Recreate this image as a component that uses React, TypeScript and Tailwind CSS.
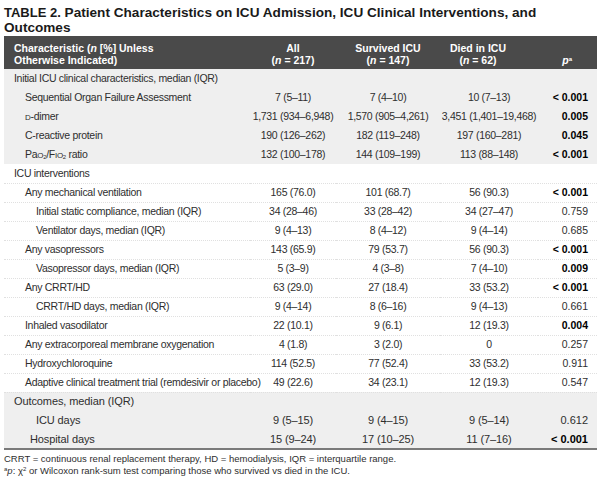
import React from "react";

type Row = {
  label: React.ReactNode;
  level: number;
  all?: string;
  survived?: string;
  died?: string;
  p?: string;
  bold?: boolean;
};

type Section = { gray: boolean; rows: Row[] };

const Pao2 = (
  <span>
    Pa<span className="text-[8px]">O</span>
    <sub className="text-[6px]">2</sub>/F<span className="text-[8px]">I</span>
    <span className="text-[8px]">O</span>
    <sub className="text-[6px]">2</sub> ratio
  </span>
);

const sections: Section[] = [
  {
    gray: true,
    rows: [
      { label: "Initial ICU clinical characteristics, median (IQR)", level: 0 },
      { label: "Sequential Organ Failure Assessment", level: 1, all: "7 (5–11)", survived: "7 (4–10)", died: "10 (7–13)", p: "< 0.001", bold: true },
      {
        label: (
          <span>
            <span className="text-[8px]">D</span>-dimer
          </span>
        ),
        level: 1,
        all: "1,731 (934–6,948)",
        survived: "1,570 (905–4,261)",
        died: "3,451 (1,401–19,468)",
        p: "0.005",
        bold: true,
      },
      { label: "C-reactive protein", level: 1, all: "190 (126–262)", survived: "182 (119–248)", died: "197 (160–281)", p: "0.045", bold: true },
      { label: Pao2, level: 1, all: "132 (100–178)", survived: "144 (109–199)", died: "113 (88–148)", p: "< 0.001", bold: true },
    ],
  },
  {
    gray: false,
    rows: [
      { label: "ICU interventions", level: 0 },
      { label: "Any mechanical ventilation", level: 1, all: "165 (76.0)", survived: "101 (68.7)", died: "56 (90.3)", p: "< 0.001", bold: true },
      { label: "Initial static compliance, median (IQR)", level: 2, all: "34 (28–46)", survived: "33 (28–42)", died: "34 (27–47)", p: "0.759" },
      { label: "Ventilator days, median (IQR)", level: 2, all: "9 (4–13)", survived: "8 (4–12)", died: "9 (4–14)", p: "0.685" },
      { label: "Any vasopressors", level: 1, all: "143 (65.9)", survived: "79 (53.7)", died: "56 (90.3)", p: "< 0.001", bold: true },
      { label: "Vasopressor days, median (IQR)", level: 2, all: "5 (3–9)", survived: "4 (3–8)", died: "7 (4–10)", p: "0.009", bold: true },
      { label: "Any CRRT/HD", level: 1, all: "63 (29.0)", survived: "27 (18.4)", died: "33 (53.2)", p: "< 0.001", bold: true },
      { label: "CRRT/HD days, median (IQR)", level: 2, all: "9 (4–14)", survived: "8 (6–16)", died: "9 (4–13)", p: "0.661" },
      { label: "Inhaled vasodilator", level: 1, all: "22 (10.1)", survived: "9 (6.1)", died: "12 (19.3)", p: "0.004", bold: true },
      { label: "Any extracorporeal membrane oxygenation", level: 1, all: "4 (1.8)", survived: "3 (2.0)", died: "0", p: "0.257" },
      { label: "Hydroxychloroquine", level: 1, all: "114 (52.5)", survived: "77 (52.4)", died: "33 (53.2)", p: "0.911" },
      { label: "Adaptive clinical treatment trial (remdesivir or placebo)", level: 1, all: "49 (22.6)", survived: "34 (23.1)", died: "12 (19.3)", p: "0.547" },
    ],
  },
  {
    gray: true,
    rows: [
      { label: "Outcomes, median (IQR)", level: 0 },
      { label: "ICU days", level: 3, all: "9 (5–15)", survived: "9 (4–15)", died: "9 (5–14)", p: "0.612" },
      { label: "Hospital days", level: 4, all: "15 (9–24)", survived: "17 (10–25)", died: "11 (7–16)", p: "< 0.001", bold: true },
    ],
  },
];

// left padding per indent level (table starts at x=4)
const indent = ["pl-[10px]", "pl-[21px]", "pl-[32px]", "pl-[32px]", "pl-[26px]"];

export default function App() {
  return (
    <div className="w-[600px] h-[477px] bg-white text-[#2e2e2e] font-['Liberation_Sans',Arial,sans-serif] overflow-hidden">
      <h1 className="px-1 pt-[5px] mb-[1px] text-[13.6px] leading-[15px] font-bold text-[#1a1a1a]">
        <span className="whitespace-nowrap">
          <span className="text-[13px]">TABLE 2.</span>{" "}
          <span>Patient Characteristics on ICU Admission, ICU Clinical Interventions, and</span>
        </span>
        <br />
        <span>Outcomes</span>
      </h1>

      <table className="ml-1 w-[593px] table-fixed border-collapse">
        <colgroup>
          <col className="w-[246px]" />
          <col className="w-[86px]" />
          <col className="w-[104px]" />
          <col className="w-[98px]" />
          <col className="w-[59px]" />
        </colgroup>
        <thead>
          <tr className="h-[33px] bg-[#4a4a4a] text-white text-[10.5px] leading-[12px] font-bold">
            <th className="pl-[10px] pt-[3px] text-left">
              Characteristic (<i>n</i> [%] Unless
              <br />
              Otherwise Indicated)
            </th>
            <th className="pt-[3px] text-center">
              All
              <br />(<i>n</i> = 217)
            </th>
            <th className="pt-[3px] text-center">
              Survived ICU
              <br />(<i>n</i> = 147)
            </th>
            <th className="pt-[3px] pr-[22px] text-center">
              Died in ICU
              <br />(<i>n</i> = 62)
            </th>
            <th className="pt-[15px] pr-[25px] text-right">
              <i>p</i>
              <sup className="text-[6px]">a</sup>
            </th>
          </tr>
        </thead>
        {sections.map((s, si) => {
          const outcomes = si === 2;
          return (
            <tbody key={si} className={s.gray ? "bg-[#efefef]" : "bg-white"}>
              {s.rows.map((r, ri) => {
                const last = outcomes && ri === s.rows.length - 1;
                return (
                  <tr
                    key={ri}
                    className={`h-[19px] leading-[13px] ${
                      outcomes ? "text-[11px] tracking-[-0.1px]" : "text-[10.5px] tracking-[-0.3px]"
                    } ${s.gray ? "" : "border-b border-dotted border-[#e0e0e0]"} ${
                      last ? "border-b-2 border-solid border-b-[#7a7a7a]" : ""
                    }`}
                  >
                    <td className={`${indent[r.level]} whitespace-nowrap`}>{r.label}</td>
                    <td className="text-center whitespace-nowrap">{r.all}</td>
                    <td className="text-center whitespace-nowrap">{r.survived}</td>
                    <td className="text-center whitespace-nowrap">{r.died}</td>
                    <td
                      className={`pr-[9px] text-right whitespace-nowrap tracking-normal ${
                        r.bold ? "font-bold text-black" : ""
                      }`}
                    >
                      {r.p}
                    </td>
                  </tr>
                );
              })}
            </tbody>
          );
        })}
      </table>

      <div className="px-1 pt-[3px] text-[9.5px] leading-[12px] text-[#2e2e2e]">
        <p>CRRT = continuous renal replacement therapy, HD = hemodialysis, IQR = interquartile range.</p>
        <p>
          <sup className="text-[6px]">a</sup>
          <i>p</i>: χ<sup className="text-[6px]">2</sup> or Wilcoxon rank-sum test comparing those who survived vs died in the ICU.
        </p>
      </div>
    </div>
  );
}
